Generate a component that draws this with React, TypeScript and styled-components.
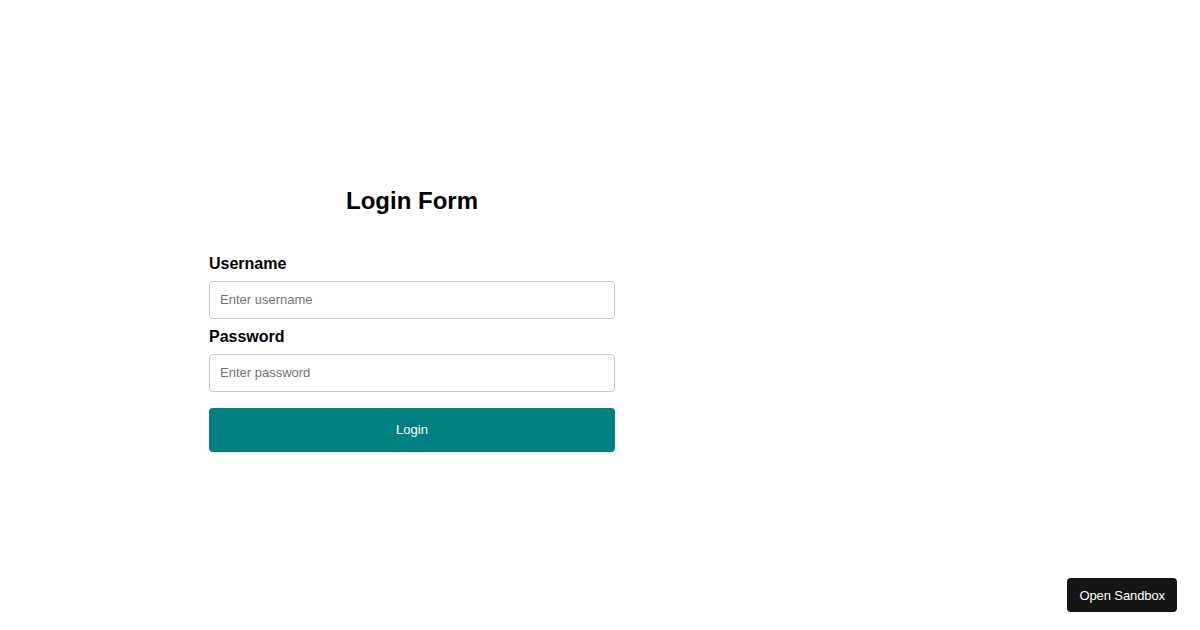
import React, { FC, useState } from 'react';
import styled, { createGlobalStyle } from 'styled-components';

const GlobalStyle = createGlobalStyle`
  html, body {
    margin: 0;
    padding: 0;
    background: #fff;
    font-family: 'Liberation Sans', Arial, sans-serif;
    color: #000;
  }
  * {
    box-sizing: border-box;
  }
`;

const Page = styled.main`
  min-height: 630px;
  padding-top: 187px;
  padding-left: 209px;
`;

const Form = styled.form`
  width: 406px;
  display: flex;
  flex-direction: column;
`;

const Title = styled.h1`
  margin: 0 0 40px;
  font-size: 24px;
  line-height: 28px;
  font-weight: 700;
  text-align: center;
`;

const Label = styled.label<{ $spaced?: boolean }>`
  display: block;
  margin: ${(p) => (p.$spaced ? '9px' : '0')} 0 8px;
  font-size: 16px;
  line-height: 18px;
  font-weight: 700;
`;

const Input = styled.input`
  width: 100%;
  height: 38px;
  padding: 0 10px 1px;
  border: 1px solid #c8c8c8;
  border-radius: 4px;
  font-family: inherit;
  font-size: 13px;
  color: #222;
  outline: none;

  &::placeholder {
    color: #737373;
  }
`;

const SubmitButton = styled.button`
  margin-top: 16px;
  height: 44px;
  width: 100%;
  padding: 0 0 1px;
  border: none;
  border-radius: 4px;
  background: #008080;
  color: #fff;
  font-family: inherit;
  font-size: 13px;
  cursor: pointer;
`;

const SandboxLink = styled.a`
  position: fixed;
  right: 23px;
  bottom: 18px;
  height: 34px;
  padding: 0 12px 0 12px;
  display: flex;
  align-items: center;
  background: #151515;
  color: #fff;
  border-radius: 4px;
  font-size: 13px;
  letter-spacing: -0.1px;
  text-decoration: none;
`;

const App: FC = () => {
  const [username, setUsername] = useState<string>('');
  const [password, setPassword] = useState<string>('');

  return (
    <>
      <GlobalStyle />
      <Page>
        <Form onSubmit={(e) => e.preventDefault()}>
          <Title>Login Form</Title>
          <Label htmlFor="username">Username</Label>
          <Input
            id="username"
            placeholder="Enter username"
            value={username}
            onChange={(e) => setUsername(e.target.value)}
          />
          <Label htmlFor="password" $spaced>
            Password
          </Label>
          <Input
            id="password"
            type="password"
            placeholder="Enter password"
            value={password}
            onChange={(e) => setPassword(e.target.value)}
          />
          <SubmitButton type="submit">Login</SubmitButton>
        </Form>
      </Page>
      <SandboxLink href="#">Open Sandbox</SandboxLink>
    </>
  );
};

export default App;
